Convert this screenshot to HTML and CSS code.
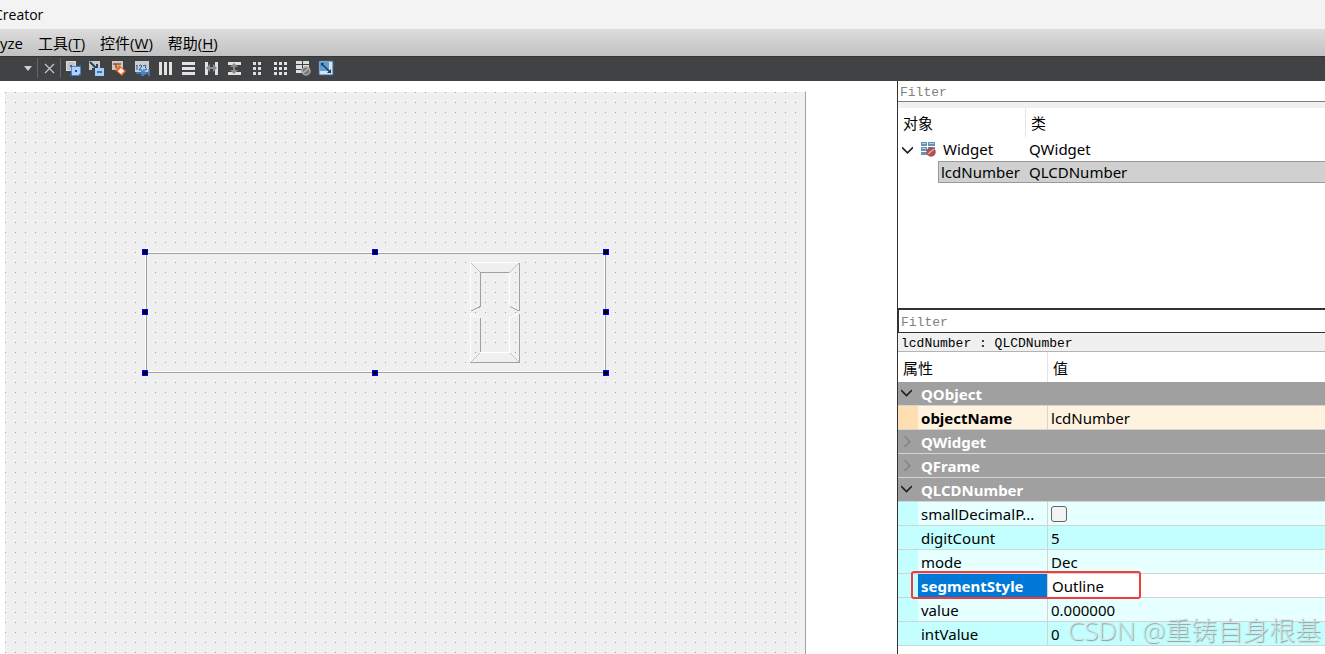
FILE: index.html
```html
<!DOCTYPE html>
<html lang="zh-CN">
<head>
  <meta charset="UTF-8" />
  <meta name="viewport" content="width=device-width, initial-scale=1.0"/>
  <title>Creator</title>
  <link rel="stylesheet" href="styles.css">
</head>
<body>

  <header class="titlebar"><span>Creator</span></header>

  <nav class="menubar">
    <button>yze</button>
    <button>工具(<u>T</u>)</button>
    <button>控件(<u>W</u>)</button>
    <button>帮助(<u>H</u>)</button>
  </nav>

  <div class="toolbar">
    <button class="drop" aria-label="Open documents"><svg width="8" height="5" viewBox="0 0 8 5"><path d="M0 0h8L4 5z" fill="#d0d0d0"/></svg></button>
    <button class="close" aria-label="Close document"><svg width="11" height="11" viewBox="0 0 11 11"><path d="M1 1l9 9M10 1l-9 9" stroke="#c8c8c8" stroke-width="1.2"/></svg></button>
    <button aria-label="Edit widgets"><svg viewBox="0 0 16 16"><path d="M1 1h10v10H1z" fill="#dedede"/><path d="M2 2h8v8H2z" fill="#c4c4c4"/><path d="M6 6h10v10H6z" fill="#4d86cc"/><path d="M7 7h8v8H7z" fill="#aed2fb"/><path d="M10 10h2v2h-2z" fill="#234b8c"/><path d="M5 5h2v2H5zM14 5h2v2h-2zM5 14h2v2H5zM14 14h2v2h-2z" fill="#2f66b0"/></svg></button>
    <button aria-label="Edit signals"><svg viewBox="0 0 16 16"><path d="M1 1h11v9H1z" fill="#cacaca"/><path d="M2 2l6 6M9 4v5H4" fill="none" stroke="#26435f" stroke-width="2"/><path d="M7 8h9v8H7z" fill="#a6cdf7"/><path d="M9 12h5" stroke="#1f5598" stroke-width="1.5"/></svg></button>
    <button aria-label="Edit buddies"><svg viewBox="0 0 16 16"><path d="M1 1h11v9H1z" fill="#cacaca"/><path d="M2 4h8M5 4v4" stroke="#9d4d25" stroke-width="1.5"/><path d="M8 5l7 6-4 5-7-6z" fill="#f26b25"/><path d="M10 8l3 3-3 3-3-3z" fill="#fff"/></svg></button>
    <button aria-label="Edit tab order"><svg viewBox="0 0 16 16"><path d="M1 1h14v11H1z" fill="#c9ced5"/><path d="M3 5v5M2 6l1-1M5 6q2-2 3 0L5 10h3M9 6q3-2 3 0 0 1-1 1 2 1 1 3H9" fill="none" stroke="#245d9d" stroke-width="1"/><path d="M2 13h8M8 11l4 2-4 3zM15 9v7M12 13h3" fill="#4385d4" stroke="#4385d4" stroke-width="1.5"/></svg></button>
    <button aria-label="Lay out horizontally"><svg viewBox="0 0 16 16"><path d="M2 2h3v13H2zM7 2h3v13H7zM12 2h3v13h-3z" fill="#e2e2e2"/></svg></button>
    <button aria-label="Lay out vertically"><svg viewBox="0 0 16 16"><path d="M2 2h13v3H2zM2 7h13v3H2zM2 12h13v3H2z" fill="#e2e2e2"/></svg></button>
    <button aria-label="Lay out horizontally in splitter"><svg viewBox="0 0 16 16"><path d="M2 2h3v13H2zM12 2h3v13h-3z" fill="#e2e2e2"/><path d="M3 8l4-4v3h3V4l4 4-4 4V9H7v3z" fill="#8c8c8c"/></svg></button>
    <button aria-label="Lay out vertically in splitter"><svg viewBox="0 0 16 16"><path d="M2 2h13v3H2zM2 12h13v3H2z" fill="#e2e2e2"/><path d="M8 3l4 4H9v3h3l-4 4-4-4h3V7H4z" fill="#8c8c8c"/></svg></button>
    <button aria-label="Lay out in a form"><svg viewBox="0 0 16 16"><path d="M4 2h3v3H4zM9 2h3v3H9zM4 7h3v3H4zM9 7h3v3H9zM4 12h3v3H4zM9 12h3v3H9z" fill="#dedede"/></svg></button>
    <button aria-label="Lay out in a grid"><svg viewBox="0 0 16 16"><path d="M2 2h3v3H2zM7 2h3v3H7zM12 2h3v3h-3zM2 7h3v3H2zM7 7h3v3H7zM12 7h3v3h-3zM2 12h3v3H2zM7 12h3v3H7zM12 12h3v3h-3z" fill="#e2e2e2"/></svg></button>
    <button aria-label="Break layout"><svg viewBox="0 0 16 16"><path d="M1 1h6v3H1zM8 1h6v3H8zM1 5h6v4H1zM8 5h6v3H8zM1 10h7v3H1z" fill="#dedede"/><circle cx="11" cy="11" r="4" fill="#777" stroke="#a6a6a6" stroke-width="1.5"/><path d="M8 13l6-5" stroke="#b8b8b8" stroke-width="1.5"/></svg></button>
    <button aria-label="Adjust size"><svg viewBox="0 0 16 16"><path d="M1 1h14v14H1z" fill="#d7e3ed"/><path d="M2 2h9v9H2z" fill="#5f9fd6"/><path d="M1 1h14v14H1z" fill="none" stroke="#386596"/><path d="M4 4l8 8" stroke="#123b5c" stroke-width="1.5"/><path d="M3 3h3L3 6zM13 9v4H9z" fill="#123b5c"/></svg></button>
  </div>

  <main class="workspace">
    <section class="editor">
      <div class="form">
        <div class="lcd">
          <svg class="digit" width="52" height="104" viewBox="0 0 52 104" fill="none" shape-rendering="crispEdges">
            <path d="M2 2L12 12M50 2L40 12M2 101L12 91M50 101L40 91" stroke="#c4c4c4"/>
            <path d="M1.5 50V1.5H50M40.5 12V45M1.5 101V53L11 57M50 53L40.5 57V91.5H11" stroke="#fff"/>
            <path d="M40 11.5H11.5V45.5L2 50M41 45.5L50 50M50.5 2V50M50.5 53V101.5H1M11.5 57V91" stroke="#a0a0a0"/>
          </svg>
          <i class="handle nw"></i><i class="handle n"></i><i class="handle ne"></i>
          <i class="handle w"></i><i class="handle e"></i>
          <i class="handle sw"></i><i class="handle s"></i><i class="handle se"></i>
        </div>
      </div>
    </section>

    <aside class="side">
      <div class="objects">
        <input class="filter" type="text" placeholder="Filter" aria-label="Filter objects">
        <table class="tree">
          <thead>
            <tr><th>对象</th><th>类</th></tr>
          </thead>
          <tbody>
            <tr>
              <td>
                <div class="node">
                  <svg class="chevron" viewBox="0 0 10 10"><path d="M0 3l5 5 5-5"/></svg>
                  <svg width="16" height="16" viewBox="0 0 16 16"><path d="M1 1h6v4H1zM8 1h7v4H8zM1 6h6v4H1zM8 6h7v4H8zM1 11h7v3H1z" fill="#6594b5"/><path d="M2 2h4v1H2zM9 2h5v1H9zM2 7h4v1H2z" fill="#a9d2ea"/><circle cx="11" cy="11" r="4" fill="#a55555" stroke="#b54a4c" stroke-width="1.5"/><path d="M8 13l6-5" stroke="#e2a7a5" stroke-width="1.5"/></svg>
                  <span>Widget</span>
                </div>
              </td>
              <td>QWidget</td>
            </tr>
            <tr class="selected"><td><div class="leaf">lcdNumber</div></td><td>QLCDNumber</td></tr>
          </tbody>
        </table>
      </div>

      <div class="properties">
        <input class="filter boxed" type="text" placeholder="Filter" aria-label="Filter properties">
        <div class="current">lcdNumber : QLCDNumber</div>
        <table class="props">
          <colgroup>
            <col class="col-branch">
            <col class="col-name">
            <col>
          </colgroup>
          <thead>
            <tr><th colspan="2">属性</th><th>值</th></tr>
          </thead>
          <tbody>
            <tr class="group"><td><svg class="chevron" viewBox="0 0 10 10"><path d="M0 2l5 5 5-5"/></svg></td><td colspan="2">QObject</td></tr>
            <tr class="name"><td></td><td><b>objectName</b></td><td>lcdNumber</td></tr>
            <tr class="group closed"><td><svg class="chevron" viewBox="0 0 10 10"><path d="M3 0l5 5-5 5"/></svg></td><td colspan="2">QWidget</td></tr>
            <tr class="group closed"><td><svg class="chevron" viewBox="0 0 10 10"><path d="M3 0l5 5-5 5"/></svg></td><td colspan="2">QFrame</td></tr>
            <tr class="group"><td><svg class="chevron" viewBox="0 0 10 10"><path d="M0 2l5 5 5-5"/></svg></td><td colspan="2">QLCDNumber</td></tr>
            <tr class="light"><td></td><td><label for="smallDecimal">smallDecimalP...</label></td><td><input type="checkbox" id="smallDecimal"></td></tr>
            <tr class="dark"><td></td><td>digitCount</td><td>5</td></tr>
            <tr class="light"><td></td><td>mode</td><td>Dec</td></tr>
            <tr class="dark editing">
              <td><div class="mark"></div></td>
              <td><label for="segmentStyle">segmentStyle</label></td>
              <td><select id="segmentStyle"><option>Outline</option></select></td>
            </tr>
            <tr class="light"><td></td><td>value</td><td>0.000000</td></tr>
            <tr class="dark"><td></td><td>intValue</td><td>0</td></tr>
          </tbody>
        </table>
      </div>
    </aside>

    <div class="watermark">CSDN @重铸自身根基</div>
  </main>

</body>
</html>
```
FILE: styles.css
```css
* {
  box-sizing: border-box;
  margin: 0;
  padding: 0;
}

body {
  display: flex;
  flex-direction: column;
  height: 100vh;
  overflow: hidden;
  background-color: #fff;
  color: #000;
  font-family: "Noto Sans", "Noto Sans CJK SC", sans-serif;
  font-size: 15px;
}

button,
input,
select {
  border: none;
  background: none;
  color: inherit;
  font: inherit;
}

.titlebar {
  flex: none;
  height: 29px;
  line-height: 29px;
  background-color: #f3f3f3;
  font-family: "Open Sans", sans-serif;
  font-size: 14px;
  overflow: hidden;
}

.titlebar span {
  margin-left: -6px;
}

.menubar {
  flex: none;
  display: flex;
  gap: 15px;
  height: 27px;
  background: linear-gradient(#dcdcdc, #c2c2c2);
  font-family: "Open Sans", "Noto Sans CJK SC", sans-serif;
  font-size: 15px;
}

.menubar u {
  text-underline-offset: 2px;
}

.toolbar {
  flex: none;
  display: flex;
  align-items: center;
  height: 25px;
  padding-bottom: 2px;
  background-color: #404244;
  border-top: 1px solid #353638;
}

.toolbar button {
  display: flex;
  align-items: center;
  justify-content: center;
  width: 23px;
  height: 20px;
}

.toolbar button svg {
  flex: none;
}

.toolbar button:not(.drop):not(.close) svg {
  width: 16px;
  height: 16px;
}

.toolbar .drop {
  width: 38px;
  padding-left: 18px;
  border-right: 1px solid #666;
}

.toolbar .close {
  border-right: 1px solid #666;
}

.workspace {
  position: relative;
  flex: 1;
  min-height: 0;
  display: grid;
  grid-template-columns: minmax(0, 1fr) 428px;
  overflow: hidden;
}

.editor {
  padding: 10px 91px 0 5px;
}

.form {
  position: relative;
  height: 100%;
  border-top: 1px solid #fff;
  border-right: 1px solid #a0a0a0;
  background-color: #f0f0f0;
  background-image: conic-gradient(from 270deg at 1px 1px, #a0a0a0 90deg, transparent 0);
  background-size: 10px 10px;
}

/* the widget on the form */
.lcd {
  position: absolute;
  left: 140px;
  top: 160px;
  width: 461px;
  height: 121px;
  border: 1px solid #a0a0a0;
  border-top-color: #fff;
  border-left-color: #fff;
  box-shadow: inset 1px 1px #a0a0a0, inset -1px -1px #fff;
}

.digit {
  position: absolute;
  left: 323px;
  top: 8px;
}

.handle {
  position: absolute;
  width: 6px;
  height: 6px;
  background-color: #000;
  border: 1px solid #00f;
}

.nw, .n, .ne { top: -4px; }
.w, .e { top: 56px; }
.sw, .s, .se { bottom: -4px; }
.nw, .w, .sw { left: -4px; }
.n, .s { left: 226px; }
.ne, .e, .se { right: -4px; }

.side {
  display: flex;
  flex-direction: column;
  border-left: 1px solid #333;
  min-height: 0;
}

.objects {
  flex: none;
  height: 227px;
}

.filter {
  display: block;
  width: 100%;
  height: 21px;
  padding: 2px 2px 0;
  border-bottom: 1px solid #808080;
  background-color: #fff;
  font-family: "Liberation Mono", monospace;
  font-size: 13px;
  outline: none;
}

.filter::placeholder {
  color: #808080;
}

.filter.boxed {
  height: 25px;
  border-top: 2px solid #333;
  border-bottom: 1px solid #333;
  border-left: 1px solid #333;
}

table {
  width: 100%;
  border-collapse: separate;
  border-spacing: 0;
  table-layout: fixed;
}

th {
  font-weight: normal;
  text-align: left;
}

.tree {
  border-top: 6px solid #f0f0f0;
}

.tree th {
  height: 29px;
  padding-left: 5px;
}

.tree th:first-child {
  width: 128px;
  border-right: 1px solid #e5e5e5;
}

.tree td {
  height: 24px;
  padding-left: 3px;
  line-height: 20px;
}

.tree td:first-child {
  padding-left: 0;
}

.node {
  display: flex;
  align-items: center;
  gap: 7px;
  padding-left: 4px;
}

.tree .selected td {
  height: 22px;
}

.tree .selected td:last-child {
  background-color: #d0d0d0;
  border-top: 1px solid #999;
  border-bottom: 1px solid #999;
}

.leaf {
  margin-left: 40px;
  padding-left: 2px;
  background-color: #d0d0d0;
  border: 1px solid #999;
  border-right: none;
  white-space: nowrap;
}

.chevron {
  display: block;
  width: 11px;
  height: 11px;
  fill: none;
  stroke: #222;
  stroke-width: 1.5;
}

.current {
  height: 19px;
  padding-left: 3px;
  background-color: #f0f0f0;
  border-bottom: 1px solid #b4b4b4;
  font-family: "Liberation Mono", monospace;
  font-size: 13px;
  line-height: 21px;
}

.props th {
  height: 30px;
  padding-left: 5px;
}

.props th:first-child {
  border-right: 1px solid #e5e5e5;
}

.col-branch {
  width: 20px;
}

.col-name {
  width: 130px;
}

.props td {
  height: 24px;
  padding-left: 3px;
  line-height: 20px;
  border-bottom: 1px solid #d4d4d4;
  white-space: nowrap;
}

.props tr:not(.group) td:nth-child(2) {
  border-right: 1px solid #d4d4d4;
}

.group td {
  background-color: #a0a0a0;
  color: #fff;
  font-weight: bold;
}

.closed .chevron {
  stroke: #858585;
}

.name td { background-color: #fff2df; }
.name td:first-child { background-color: #ffdfb2; }
.light td { background-color: #e6ffff; }
.dark td,
.light td:first-child { background-color: #c4ffff; }

.props input[type="checkbox"] {
  appearance: none;
  display: block;
  width: 16px;
  height: 16px;
  border: 1px solid #666;
  border-radius: 3px;
  background-color: #f3f3f3;
}

.editing td {
  position: relative;
}

.editing td:first-child {
  z-index: 1;
}

.editing td:nth-child(2) {
  background-color: #0078d7;
  color: #fff;
  font-weight: bold;
}

.editing td:last-child {
  padding-left: 4px;
  background-color: #fff;
}

.editing select {
  display: block;
  appearance: none;
  width: 100%;
  height: 22px;
  line-height: 22px;
}

/* red frame round the edited row */
.mark {
  position: absolute;
  left: 13px;
  top: -3px;
  width: 230px;
  height: 28px;
  border: 2px solid #f23c3c;
  border-radius: 3px;
  pointer-events: none;
}

.watermark {
  position: absolute;
  right: 4px;
  bottom: 6px;
  color: rgba(225, 232, 232, 0.8);
  font-family: "Open Sans", "Noto Sans CJK SC", sans-serif;
  font-size: 26px;
  font-weight: 300;
  line-height: 36px;
  text-shadow: 1px 1px 1px rgba(100, 120, 120, 0.7);
}
```
